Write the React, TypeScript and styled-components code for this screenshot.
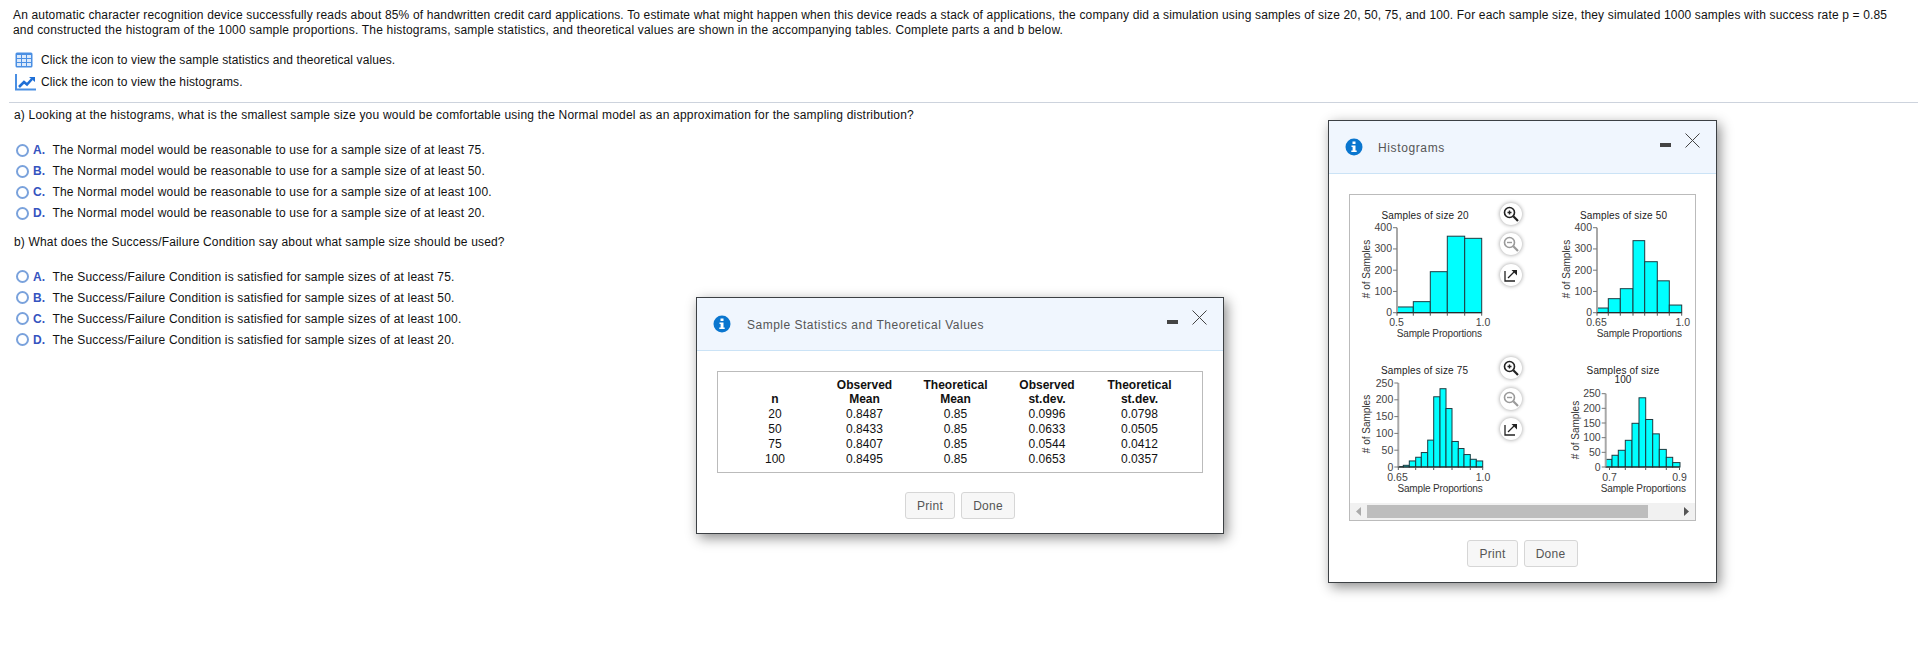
import styled, { createGlobalStyle } from 'styled-components'

const GlobalStyle = createGlobalStyle`
  html, body { margin: 0; padding: 0; background: #fff; }
  body { font-family: "Liberation Sans", Arial, sans-serif; font-size: 12px; color: #111; }
`

const Page = styled.div`
  position: relative;
  width: 1918px;
  height: 662px;
  overflow: hidden;
`
const Intro = styled.p`
  margin: 0;
  padding: 8px 0 0 13px;
  line-height: 14.5px;
  letter-spacing: .155px;
  white-space: nowrap;
`
const IntroTail = styled.span`
  letter-spacing: .195px;
`
const Links = styled.div`
  margin-top: 12px;
  padding-left: 15px;
`
const LinkRow = styled.div`
  display: flex;
  align-items: center;
  height: 22px;
  letter-spacing: .11px;
`
const LinkIcon = styled.span`
  width: 26px;
  display: flex;
  align-items: center;
`
const Rule = styled.hr`
  border: 0;
  height: 1px;
  background: #cdd3dd;
  margin: 9px 0 0 9px;
`
const Question = styled.div<{ $gap: number; $spacing: number }>`
  margin-top: ${p => p.$gap}px;
  padding-left: 14px;
  line-height: 15px;
  letter-spacing: ${p => p.$spacing}px;
`
const Options = styled.div<{ $gap: number }>`
  margin-top: ${p => p.$gap}px;
`
const Option = styled.div`
  display: flex;
  align-items: center;
  height: 21px;
  padding-left: 16px;
  letter-spacing: .185px;
`
const Radio = styled.span`
  width: 13px;
  height: 13px;
  box-sizing: border-box;
  border: 2px solid #7aa2dc;
  border-radius: 50%;
  margin-right: 4px;
`
const Letter = styled.span`
  width: 19.5px;
  font-weight: 700;
  color: #3553c0;
`

const Window = styled.div<{ $left: number; $top: number; $width: number; $height: number }>`
  position: absolute;
  left: ${p => p.$left}px;
  top: ${p => p.$top}px;
  width: ${p => p.$width}px;
  height: ${p => p.$height}px;
  box-sizing: border-box;
  display: flex;
  flex-direction: column;
  background: #fff;
  border: 1px solid #3c4044;
  box-shadow: 3px 4px 12px rgba(0, 0, 0, .45);
`
const Header = styled.div`
  flex: none;
  height: 52px;
  display: flex;
  align-items: center;
  padding: 0 16px 0 16px;
  background: #f0f6fe;
  border-bottom: 1px solid #cbe3f6;
`
const Title = styled.div<{ $spacing: number; $gap: number }>`
  margin-left: ${p => p.$gap}px;
  padding-top: 1px;
  font-size: 12px;
  letter-spacing: ${p => p.$spacing}px;
  color: #555;
`
const Controls = styled.div`
  margin-left: auto;
  display: flex;
  align-items: flex-start;
  gap: 14px;
  margin-top: -13px;
`
const Minimize = styled.span`
  width: 11px;
  height: 4px;
  margin-top: 10px;
  background: #444;
`
const Body = styled.div`
  flex: 1;
  padding: 20px 20px 0;
  display: flex;
  flex-direction: column;
  align-items: center;
`
const Box = styled.div<{ $height?: number }>`
  box-sizing: border-box;
  align-self: stretch;
  border: 1px solid #bbb;
  ${p => p.$height && `height: ${p.$height}px;`}
`
const StatsTable = styled.table`
  table-layout: fixed;
  border-collapse: collapse;
  margin: 6px 0 0 12px;
  width: 457px;
  text-align: center;
  th, td { padding: 0; }
  th { padding-bottom: 1px; line-height: 14px; font-weight: 700; vertical-align: bottom; color: #111; }
  td { line-height: 15px; letter-spacing: .05px; }
`
const Actions = styled.div`
  margin-top: 19px;
  display: flex;
  gap: 6px;
`
const Button = styled.button`
  height: 27px;
  box-sizing: border-box;
  padding: 0 11px;
  font: 12px "Liberation Sans", Arial, sans-serif;
  letter-spacing: .3px;
  color: #555;
  background: #f7f7f7;
  border: 1px solid #d6d6d6;
  border-radius: 3px;
`
const Viewport = styled.div`
  display: grid;
  grid-template-columns: 145px 32px 23px 145px;
  grid-template-rows: 160px 147px;
  padding-top: 1px;
  overflow: hidden;
`
const Tools = styled.div<{ $top: number }>`
  display: flex;
  flex-direction: column;
  align-items: center;
  gap: 8.5px;
  padding-top: ${p => p.$top}px;
`
const Tool = styled.span`
  width: 22px;
  height: 22px;
  border-radius: 50%;
  background: #fff;
  box-shadow: 0 0 4px rgba(0, 0, 0, .4);
  display: flex;
  align-items: center;
  justify-content: center;
`
const Spacer = styled.div``
const ScrollBar = styled.div`
  height: 17px;
  display: flex;
  align-items: center;
  background: #f1f1f1;
`
const ScrollThumb = styled.div`
  width: 281px;
  height: 13px;
  background: #bdbdbd;
`
const ArrowCell = styled.span<{ $end?: boolean }>`
  width: 17px;
  display: flex;
  justify-content: center;
  ${p => p.$end && 'margin-left: auto;'}
`
const ChartSvg = styled.svg`
  display: block;
  width: 145px;
  overflow: visible;
`
const ChartText = styled.text<{ $spacing?: number; $size?: number; $ink?: string }>`
  font-family: "Liberation Sans", Arial, sans-serif;
  font-size: ${p => p.$size ?? 10}px;
  fill: ${p => p.$ink ?? '#222'};
  letter-spacing: ${p => p.$spacing ?? 0}px;
`

function TableIcon() {
  return (
    <svg width="18" height="16" viewBox="0 0 18 16">
      <rect x="0.5" y="0.5" width="17" height="15" rx="1.5" fill="#4a8fe3" />
      {[2, 7, 12].map(x =>
        [3, 7, 11].map(y => <rect key={`${x}-${y}`} x={x} y={y} width="4" height="3" fill="#dbe9fb" />)
      )}
    </svg>
  )
}

function TrendIcon() {
  return (
    <svg width="21" height="17" viewBox="0 0 21 17">
      <path d="M1 0v15.5h20" fill="none" stroke="#4a8fe3" strokeWidth="2" />
      <path d="M4 13l5-5 3 2.5L17 5" fill="none" stroke="#1f6fd6" strokeWidth="2.6" />
      <path d="M14 3h6v5z" fill="#1f6fd6" />
    </svg>
  )
}

function InfoIcon() {
  return (
    <svg width="18" height="18" viewBox="0 0 18 18">
      <circle cx="9" cy="9" r="8.5" fill="#0a76cf" />
      <rect x="7.5" y="3.5" width="3" height="2.5" fill="#fff" />
      <path d="M6.5 7.5h4V12.5h1.2v1.6H6.3v-1.6h1.3V9.1H6.5z" fill="#fff" />
    </svg>
  )
}

function CloseIcon() {
  return (
    <svg width="15" height="15" viewBox="0 0 15 15">
      <path d="M.5.5l14 14M14.5.5l-14 14" stroke="#444" strokeWidth="1" fill="none" />
    </svg>
  )
}

function MagnifierIcon({ kind }: { kind: 'in' | 'out' }) {
  const color = kind === 'in' ? '#222' : '#9a9a9a'
  return (
    <svg width="16" height="16" viewBox="0 0 16 16">
      <circle cx="6.5" cy="6.5" r="5" fill="none" stroke={color} strokeWidth="1.6" />
      <path d="M10.3 10.3l4.7 4.7" stroke={color} strokeWidth="2.2" />
      {kind === 'in'
        ? <path d="M4.5 6.5h4M6.5 4.5v4" stroke={color} strokeWidth="1.4" />
        : <path d="M4 6.5h5" stroke={color} strokeWidth="1.4" />}
    </svg>
  )
}

function ExpandIcon() {
  return (
    <svg width="14" height="14" viewBox="0 0 14 14">
      <path d="M1 3v10h10" fill="none" stroke="#222" strokeWidth="1.3" />
      <path d="M4 10l6-6" stroke="#222" strokeWidth="1.2" />
      <path d="M7.5 2H13v5.5z" fill="#222" />
    </svg>
  )
}

type ChartSpec = {
  title: string[]
  titleX: number
  titleY: number
  left: number
  base: number
  unit: number
  edges: number[]
  values: number[]
  yTicks: number[]
  xLabels: { x: number; text: string }[]
  xTickMarks: number[]
  labelX: number
  labelY: number
  sideX: number
  sideY: number
  height: number
}

// all numbers are pixels inside the chart cell
const charts: ChartSpec[] = [
  {
    title: ['Samples of size 20'], titleX: 75, titleY: 23,
    left: 47, base: 116.7, unit: 0.2125,
    edges: [47, 63.3, 80.3, 97.3, 114.7, 131.7],
    values: [27, 52, 193, 360, 350],
    yTicks: [0, 100, 200, 300, 400],
    xLabels: [{ x: 46.5, text: '0.5' }, { x: 133, text: '1.0' }],
    xTickMarks: [47, 63.3, 80.3, 97.3, 114.7, 131.7],
    labelX: 89.3, labelY: 141, sideX: 16.7, sideY: 73, height: 160,
  },
  {
    title: ['Samples of size 50'], titleX: 73.5, titleY: 23,
    left: 47, base: 116.7, unit: 0.2125,
    edges: [47, 58.3, 70.3, 83, 94.7, 107.3, 119.3, 131.7],
    values: [22, 66, 113, 339, 240, 150, 36],
    yTicks: [0, 100, 200, 300, 400],
    xLabels: [{ x: 46.5, text: '0.65' }, { x: 132.7, text: '1.0' }],
    xTickMarks: [47, 58.3, 70.3, 83, 94.7, 107.3, 119.3, 131.7],
    labelX: 89.3, labelY: 141, sideX: 16.7, sideY: 73, height: 160,
  },
  {
    title: ['Samples of size 75'], titleX: 74.5, titleY: 18,
    left: 48.3, base: 111, unit: 0.336,
    edges: [48.3, 53.3, 59.3, 65.7, 71.3, 77.7, 83.7, 90, 96, 102, 108.3, 114, 120.3, 126.3, 132.7],
    values: [1, 5, 18, 29, 43, 80, 209, 233, 174, 76, 55, 37, 23, 18],
    yTicks: [0, 50, 100, 150, 200, 250],
    xLabels: [{ x: 47.5, text: '0.65' }, { x: 133, text: '1.0' }],
    xTickMarks: [48.3, 65.7, 83.7, 102, 120.3, 132.7],
    labelX: 90, labelY: 136, sideX: 16.7, sideY: 68, height: 147,
  },
  {
    title: ['Samples of size', '100'], titleX: 73, titleY: 18,
    left: 55.7, base: 111, unit: 0.2933,
    edges: [55.7, 62, 68.3, 75.3, 82, 89, 95.7, 102.7, 109.3, 116.3, 122.7, 130],
    values: [26, 40, 57, 91, 149, 236, 162, 113, 60, 33, 15],
    yTicks: [0, 50, 100, 150, 200, 250],
    xLabels: [{ x: 59.5, text: '0.7' }, { x: 129.5, text: '0.9' }],
    xTickMarks: [59.5, 75.3, 95.7, 116.3, 129.5],
    labelX: 93.3, labelY: 136, sideX: 25, sideY: 74, height: 147,
  },
]

function Histogram({ spec }: { spec: ChartSpec }) {
  const { left, base, unit, edges } = spec
  const right = edges[edges.length - 1]
  const top = base - spec.yTicks[spec.yTicks.length - 1] * unit
  return (
    <ChartSvg height={spec.height} viewBox={`0 0 145 ${spec.height}`}>
      {spec.title.map((line, i) => (
        <ChartText key={line} x={spec.titleX} y={spec.titleY + i * 9} textAnchor="middle" $spacing={0.15}>{line}</ChartText>
      ))}
      {spec.values.map((v, i) => (
        <rect
          key={i}
          x={edges[i]}
          y={base - v * unit}
          width={edges[i + 1] - edges[i]}
          height={v * unit}
          fill="#00ffff"
          stroke="#1d3a40"
          strokeWidth="1"
        />
      ))}
      <path d={`M${left} ${top}V${base}`} stroke="#a8a8a8" strokeWidth="2" />
      <path d={`M${left} ${base}H${right}`} stroke="#222" strokeWidth="1" />
      {spec.yTicks.map(t => (
        <g key={t}>
          <path d={`M${left - 4} ${base - t * unit}H${left}`} stroke="#777" strokeWidth="1" />
          <ChartText x={left - 5} y={base - t * unit + 3.5} textAnchor="end" $size={10.5} $ink="#444">{t}</ChartText>
        </g>
      ))}
      {spec.xTickMarks.map(x => (
        <path key={x} d={`M${x} ${base}v3`} stroke="#555" strokeWidth="1" />
      ))}
      {spec.xLabels.map(l => (
        <ChartText key={l.text} x={l.x} y={base + 13.5} textAnchor="middle" $size={10.5} $ink="#444">{l.text}</ChartText>
      ))}
      <ChartText x={spec.labelX} y={spec.labelY} textAnchor="middle" $spacing={-0.15} $ink="#333">Sample Proportions</ChartText>
      <ChartText
        x={spec.sideX}
        y={spec.sideY}
        textAnchor="middle"
        transform={`rotate(-90 ${spec.sideX} ${spec.sideY})`}
        dominantBaseline="central"
        $ink="#333"
      >
        # of Samples
      </ChartText>
    </ChartSvg>
  )
}

function ToolColumn({ top }: { top: number }) {
  return (
    <Tools $top={top}>
      <Tool><MagnifierIcon kind="in" /></Tool>
      <Tool><MagnifierIcon kind="out" /></Tool>
      <Tool><ExpandIcon /></Tool>
    </Tools>
  )
}

const firstOptions = ['75', '50', '100', '20']
const rows = [
  ['20', '0.8487', '0.85', '0.0996', '0.0798'],
  ['50', '0.8433', '0.85', '0.0633', '0.0505'],
  ['75', '0.8407', '0.85', '0.0544', '0.0412'],
  ['100', '0.8495', '0.85', '0.0653', '0.0357'],
]

function WindowHeader({ title, spacing, gap }: { title: string; spacing: number; gap: number }) {
  return (
    <Header>
      <InfoIcon />
      <Title $spacing={spacing} $gap={gap}>{title}</Title>
      <Controls>
        <Minimize />
        <CloseIcon />
      </Controls>
    </Header>
  )
}

export default function App() {
  return (
    <Page>
      <GlobalStyle />
      <Intro>
        An automatic character recognition device successfully reads about 85% of handwritten credit card applications. To estimate what might happen when this device reads a stack of applications, the company did a simulation using samples of size 20, 50, 75, and 100. For each sample size, they simulated 1000 samples with success rate p = 0.85
        <br />
        <IntroTail>and constructed the histogram of the 1000 sample proportions. The histograms, sample statistics, and theoretical values are shown in the accompanying tables. Complete parts a and b below.</IntroTail>
      </Intro>
      <Links>
        <LinkRow><LinkIcon><TableIcon /></LinkIcon>Click the icon to view the sample statistics and theoretical values.</LinkRow>
        <LinkRow><LinkIcon><TrendIcon /></LinkIcon>Click the icon to view the histograms.</LinkRow>
      </Links>
      <Rule />
      <Question $gap={5} $spacing={0.2}>a) Looking at the histograms, what is the smallest sample size you would be comfortable using the Normal model as an approximation for the sampling distribution?</Question>
      <Options $gap={16.5}>
        {firstOptions.map((n, i) => (
          <Option key={n}><Radio /><Letter>{'ABCD'[i]}.</Letter>The Normal model would be reasonable to use for a sample size of at least {n}.</Option>
        ))}
      </Options>
      <Question $gap={11.5} $spacing={0.17}>b) What does the Success/Failure Condition say about what sample size should be used?</Question>
      <Options $gap={16}>
        {firstOptions.map((n, i) => (
          <Option key={n}><Radio /><Letter>{'ABCD'[i]}.</Letter>The Success/Failure Condition is satisfied for sample sizes of at least {n}.</Option>
        ))}
      </Options>

      <Window $left={696} $top={297} $width={528} $height={237}>
        <WindowHeader title="Sample Statistics and Theoretical Values" spacing={0.5} gap={16} />
        <Body>
          <Box $height={102}>
            <StatsTable>
              <colgroup>
                <col width="90" /><col width="89" /><col width="93" /><col width="90" /><col width="95" />
              </colgroup>
              <thead>
                <tr><th>n</th><th>Observed<br />Mean</th><th>Theoretical<br />Mean</th><th>Observed<br />st.dev.</th><th>Theoretical<br />st.dev.</th></tr>
              </thead>
              <tbody>
                {rows.map(r => (
                  <tr key={r[0]}>{r.map((c, i) => <td key={i}>{c}</td>)}</tr>
                ))}
              </tbody>
            </StatsTable>
          </Box>
          <Actions><Button>Print</Button><Button>Done</Button></Actions>
        </Body>
      </Window>

      <Window $left={1328} $top={120} $width={389} $height={463}>
        <WindowHeader title="Histograms" spacing={0.62} gap={15} />
        <Body>
          <Box>
            <Viewport>
              <Histogram spec={charts[0]} />
              <ToolColumn top={6.7} />
              <Spacer />
              <Histogram spec={charts[1]} />
              <Histogram spec={charts[2]} />
              <ToolColumn top={1.3} />
              <Spacer />
              <Histogram spec={charts[3]} />
            </Viewport>
            <ScrollBar>
              <ArrowCell>
                <svg width="5" height="9" viewBox="0 0 5 9"><path d="M5 0v9L0 4.5z" fill="#aaa" /></svg>
              </ArrowCell>
              <ScrollThumb />
              <ArrowCell $end>
                <svg width="5" height="9" viewBox="0 0 5 9"><path d="M0 0v9l5-4.5z" fill="#555" /></svg>
              </ArrowCell>
            </ScrollBar>
          </Box>
          <Actions><Button>Print</Button><Button>Done</Button></Actions>
        </Body>
      </Window>
    </Page>
  )
}
